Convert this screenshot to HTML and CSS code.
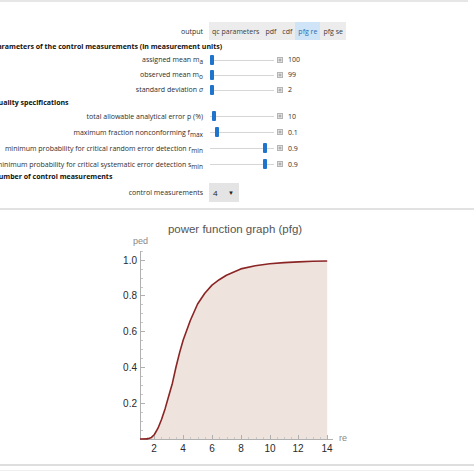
FILE: index.html
```html
<!DOCTYPE html>
<html lang="en">

<head>
    <meta charset="UTF-8">
    <meta name="viewport" content="width=device-width, initial-scale=1.0">
    <title>Power function graph</title>
    <link rel="stylesheet" href="styles.css">
</head>

<body>
    <div class="top-rule"></div>

    <div class="controls">
        <div class="row row-output">
            <div class="label"><span>output</span></div>
            <div class="setter">
                <span class="tab">qc parameters</span>
                <span class="tab">pdf</span>
                <span class="tab">cdf</span>
                <span class="tab active">pfg re</span>
                <span class="tab">pfg se</span>
            </div>
        </div>

        <div class="heading h1"><span>Parameters of the control measurements (in measurement units)</span></div>

        <div class="row row-a">
            <div class="label"><span>assigned mean m<sub>a</sub></span></div>
            <div class="slider">
                <div class="track"><span class="thumb" style="left:0px"></span></div>
                <svg class="plus" width="6" height="6" viewBox="0 0 6 6"><rect x="0.5" y="0.5" width="5" height="5" fill="#e4e4e4" stroke="#b5b5b5"/><path d="M3 1.5v3M1.5 3h3" stroke="#a0a0a0"/></svg>
                <span class="value">100</span>
            </div>
        </div>
        <div class="row row-a">
            <div class="label"><span>observed mean m<sub>o</sub></span></div>
            <div class="slider">
                <div class="track"><span class="thumb" style="left:0px"></span></div>
                <svg class="plus" width="6" height="6" viewBox="0 0 6 6"><rect x="0.5" y="0.5" width="5" height="5" fill="#e4e4e4" stroke="#b5b5b5"/><path d="M3 1.5v3M1.5 3h3" stroke="#a0a0a0"/></svg>
                <span class="value">99</span>
            </div>
        </div>
        <div class="row row-a">
            <div class="label"><span>standard deviation <i>σ</i></span></div>
            <div class="slider">
                <div class="track"><span class="thumb" style="left:0px"></span></div>
                <svg class="plus" width="6" height="6" viewBox="0 0 6 6"><rect x="0.5" y="0.5" width="5" height="5" fill="#e4e4e4" stroke="#b5b5b5"/><path d="M3 1.5v3M1.5 3h3" stroke="#a0a0a0"/></svg>
                <span class="value">2</span>
            </div>
        </div>

        <div class="heading h2"><span>Quality specifications</span></div>

        <div class="row row-b">
            <div class="label"><span>total allowable analytical error p (%)</span></div>
            <div class="slider">
                <div class="track"><span class="thumb" style="left:2px"></span></div>
                <svg class="plus" width="6" height="6" viewBox="0 0 6 6"><rect x="0.5" y="0.5" width="5" height="5" fill="#e4e4e4" stroke="#b5b5b5"/><path d="M3 1.5v3M1.5 3h3" stroke="#a0a0a0"/></svg>
                <span class="value">10</span>
            </div>
        </div>
        <div class="row row-b">
            <div class="label"><span>maximum fraction nonconforming f<sub>max</sub></span></div>
            <div class="slider">
                <div class="track"><span class="thumb" style="left:5px"></span></div>
                <svg class="plus" width="6" height="6" viewBox="0 0 6 6"><rect x="0.5" y="0.5" width="5" height="5" fill="#e4e4e4" stroke="#b5b5b5"/><path d="M3 1.5v3M1.5 3h3" stroke="#a0a0a0"/></svg>
                <span class="value">0.1</span>
            </div>
        </div>
        <div class="row row-b">
            <div class="label"><span>minimum probability for critical random error detection r<sub>min</sub></span></div>
            <div class="slider">
                <div class="track"><span class="thumb" style="left:53px"></span></div>
                <svg class="plus" width="6" height="6" viewBox="0 0 6 6"><rect x="0.5" y="0.5" width="5" height="5" fill="#e4e4e4" stroke="#b5b5b5"/><path d="M3 1.5v3M1.5 3h3" stroke="#a0a0a0"/></svg>
                <span class="value">0.9</span>
            </div>
        </div>
        <div class="row row-b">
            <div class="label"><span>minimum probability for critical systematic error detection s<sub>min</sub></span></div>
            <div class="slider">
                <div class="track"><span class="thumb" style="left:53px"></span></div>
                <svg class="plus" width="6" height="6" viewBox="0 0 6 6"><rect x="0.5" y="0.5" width="5" height="5" fill="#e4e4e4" stroke="#b5b5b5"/><path d="M3 1.5v3M1.5 3h3" stroke="#a0a0a0"/></svg>
                <span class="value">0.9</span>
            </div>
        </div>

        <div class="heading h3"><span>Number of control measurements</span></div>

        <div class="row row-menu">
            <div class="label"><span>control measurements</span></div>
            <div class="popup"><span>4</span><span class="arrow">▼</span></div>
        </div>
    </div>

    <div class="divider"></div>

    <div class="plot">
        <!-- viewBox uses page coordinates so the axes can be laid out in pixels -->
        <svg width="474" height="254" viewBox="0 211 474 254">
            <text class="title" x="235" y="234" text-anchor="middle">power function graph (pfg)</text>
            <text class="axis-name" x="133" y="245">ped</text>
            <text class="axis-name" x="339" y="442">re</text>

            <polygon class="area" points="140,440 147.2,439.9 151.5,438.4 154.4,435.5 158,429.2 161.6,420.2 165.2,409.4 168.8,396.8 172.4,384.2 176,368 179.6,353.6 183.2,341 190.4,321.2 197.6,305 204.8,294.2 212,286.1 219.2,280.7 226.4,276.2 240.8,269.9 255.2,266.7 269.6,264.7 284,263.6 298.4,262.9 312.8,262.3 327.2,262 327.2,440"/>

            <g class="axis">
                <line x1="140.5" y1="252" x2="140.5" y2="440.5"/>
                <line x1="140" y1="440.5" x2="333" y2="440.5"/>
                <path class="major" d="M141 261.5h4M141 296.5h4M141 332.5h4M141 368.5h4M141 404.5h4"/>
                <path class="minor" d="M141 270.5h2M141 279.5h2M141 288.5h2M141 305.5h2M141 314.5h2M141 323.5h2M141 341.5h2M141 350.5h2M141 359.5h2M141 377.5h2M141 386.5h2M141 395.5h2M141 413.5h2M141 422.5h2M141 431.5h2M141 252.5h2"/>
                <path class="major" d="M154.5 440v-4M183.5 440v-4M212.5 440v-4M241.5 440v-4M270.5 440v-4M298.5 440v-4M327.5 440v-4"/>
                <path class="minor" d="M161.5 440v-2M169.5 440v-2M176.5 440v-2M190.5 440v-2M198.5 440v-2M205.5 440v-2M219.5 440v-2M227.5 440v-2M234.5 440v-2M248.5 440v-2M256.5 440v-2M263.5 440v-2M277.5 440v-2M284.5 440v-2M291.5 440v-2M306.5 440v-2M313.5 440v-2M320.5 440v-2M147.5 440v-2"/>
            </g>

            <polyline class="curve" points="140,440 147.2,439.9 151.5,438.4 154.4,435.5 158,429.2 161.6,420.2 165.2,409.4 168.8,396.8 172.4,384.2 176,368 179.6,353.6 183.2,341 190.4,321.2 197.6,305 204.8,294.2 212,286.1 219.2,280.7 226.4,276.2 240.8,269.9 255.2,266.7 269.6,264.7 284,263.6 298.4,262.9 312.8,262.3 327.2,262"/>

            <g class="ticks-y">
                <text x="137" y="265">1.0</text>
                <text x="137" y="300">0.8</text>
                <text x="137" y="336">0.6</text>
                <text x="137" y="372">0.4</text>
                <text x="137" y="408">0.2</text>
            </g>
            <g class="ticks-x">
                <text x="154" y="453">2</text>
                <text x="183" y="453">4</text>
                <text x="212" y="453">6</text>
                <text x="241" y="453">8</text>
                <text x="270" y="453">10</text>
                <text x="298" y="453">12</text>
                <text x="327" y="453">14</text>
            </g>
        </svg>
    </div>

    <div class="bottom-rule"></div>
    <div class="bottom-rule light"></div>
</body>

</html>
```

FILE: styles.css
```css
body {
    margin: 0;
    width: 474px;
    height: 474px;
    overflow: hidden;
    background: #fff;
    font-family: "Open Sans", "Noto Sans", sans-serif;
    font-size: 7px;
    color: #2e2e2e;
}

.top-rule {
    width: 468px;
    height: 2px;
    background-color: #e6e6e6;
}

.controls {
    padding-top: 20px;
}

.row {
    display: flex;
    align-items: center;
    gap: 6px;
}

.label {
    width: 203px;
    flex: none;
    display: flex;
    justify-content: flex-end;
    white-space: nowrap;
}

.label sub {
    font-size: 6.5px;
    vertical-align: -2px;
    line-height: 0;
}

.row-output {
    height: 18px;
}

.row-a {
    height: 15px;
}

.row-b {
    height: 16px;
}

.row-menu {
    height: 19px;
    margin-top: 3px;
}

.heading {
    font-weight: bold;
    color: #111;
    white-space: nowrap;
    margin-left: -7px;
    display: flex;
    align-items: center;
}

.h1 {
    height: 12px;
}

.h2 {
    height: 11px;
}

.h3 {
    height: 8px;
}

.setter {
    display: flex;
    height: 18px;
    background-color: #ececec;
}

.tab {
    display: flex;
    align-items: center;
    padding: 0 3px;
    color: #3c3c3c;
}

.tab.active {
    background-color: #cfe4f6;
    color: #2c6cae;
}

.slider {
    display: flex;
    align-items: center;
    margin-left: 1px;
}

.track {
    position: relative;
    width: 64px;
    height: 10px;
}

.track::before {
    content: "";
    position: absolute;
    left: 0;
    right: 0;
    top: 5px;
    height: 1px;
    background-color: #d6d6d6;
}

.thumb {
    position: absolute;
    top: 0;
    width: 4px;
    height: 10px;
    background-color: #1f74cc;
    border-radius: 1px;
}

.plus {
    margin-left: 3px;
}

.value {
    margin-left: 5px;
}

.popup {
    display: flex;
    align-items: center;
    justify-content: space-between;
    width: 30px;
    height: 19px;
    padding: 0 5px 0 4px;
    box-sizing: border-box;
    background-color: #e4e4e4;
    color: #222;
    font-size: 8px;
}

.popup .arrow {
    font-size: 6px;
}

.divider {
    margin-top: 6px;
    height: 2px;
    background-color: #e2e2e2;
}

.plot svg {
    display: block;
    font-family: "Liberation Sans", Arial, sans-serif;
}

.title {
    font-size: 11.5px;
    fill: #555;
}

.axis-name {
    font-size: 9px;
    fill: #888;
}

.area {
    fill: #eee4dd;
}

.axis line,
.axis path {
    stroke: #b0b0b0;
    stroke-width: 1;
    fill: none;
}

.axis .minor {
    stroke: #c8c8c8;
}

.curve {
    fill: none;
    stroke: #8b2525;
    stroke-width: 1.6;
    stroke-linejoin: round;
}

.ticks-y text {
    font-size: 10px;
    fill: #2a2a2a;
    text-anchor: end;
}

.ticks-x text {
    font-size: 10px;
    fill: #2a2a2a;
    text-anchor: middle;
}

.bottom-rule {
    height: 2px;
    background-color: #dedede;
}

.bottom-rule.light {
    margin-top: 4px;
    height: 1px;
    background-color: #efefef;
}
```
